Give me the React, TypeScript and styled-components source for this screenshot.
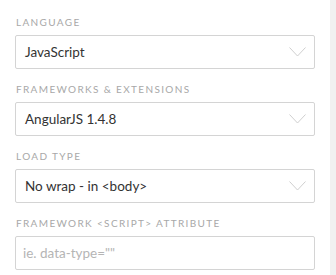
import React from "react";
import styled, { createGlobalStyle } from "styled-components";

const Global = createGlobalStyle`
  html, body { margin: 0; padding: 0; background: #fff; }
  body { font-family: Lato, "Open Sans", sans-serif; }
`;

const Page = styled.div`
  display: flex;
  width: 336px;
  height: 275px;
  overflow: hidden;
`;

const Panel = styled.div`
  flex: 1;
  display: flex;
  flex-direction: column;
`;

const TopStrip = styled.div`
  width: 305px;
  height: 3px;
  background: #f1f1f1;
`;

const Side = styled.div`
  width: 6px;
  background: #f1f1f1;
`;

const Form = styled.div`
  display: flex;
  flex-direction: column;
  padding: 16px 0 0 15px;
  gap: 0;
`;

const Field = styled.div`
  display: flex;
  flex-direction: column;
  margin-bottom: 14px;
`;

const Label = styled.div`
  font-family: Lato, sans-serif;
  font-size: 10px;
  line-height: 12px;
  letter-spacing: 1.35px;
  text-transform: uppercase;
  color: #a8a8a8;
  padding-left: 1px;
  margin-bottom: 7px;
`;

const Box = styled.div<{ $placeholder?: boolean }>`
  box-sizing: border-box;
  width: 300px;
  height: 34px;
  border: 1px solid #d4d4d4;
  border-radius: 2px;
  display: flex;
  align-items: center;
  justify-content: space-between;
  padding: 0 8px 0 ${(p) => (p.$placeholder ? 7 : 9)}px;
  font-family: Lato, sans-serif;
  font-size: 13.5px;
  color: ${(p) => (p.$placeholder ? "#b5b5b5" : "#333")};
`;

const Chevron = () => (
  <svg width="17" height="10" viewBox="0 0 17 10" fill="none">
    <path d="M0.5 0.5 L8.5 9 L16.5 0.5" stroke="#cfcfcf" strokeWidth="1" />
  </svg>
);

const Select = ({ value }: { value: string }) => (
  <Box>
    <span>{value}</span>
    <Chevron />
  </Box>
);

export default function App() {
  return (
    <Page>
      <Global />
      <Panel>
        <TopStrip />
        <Form>
          <Field>
            <Label>Language</Label>
            <Select value="JavaScript" />
          </Field>
          <Field>
            <Label>Frameworks &amp; Extensions</Label>
            <Select value="AngularJS 1.4.8" />
          </Field>
          <Field>
            <Label>Load Type</Label>
            <Select value="No wrap - in <body>" />
          </Field>
          <Field>
            <Label>Framework &lt;script&gt; attribute</Label>
            <Box $placeholder>ie. data-type=""</Box>
          </Field>
        </Form>
      </Panel>
      <Side />
    </Page>
  );
}
